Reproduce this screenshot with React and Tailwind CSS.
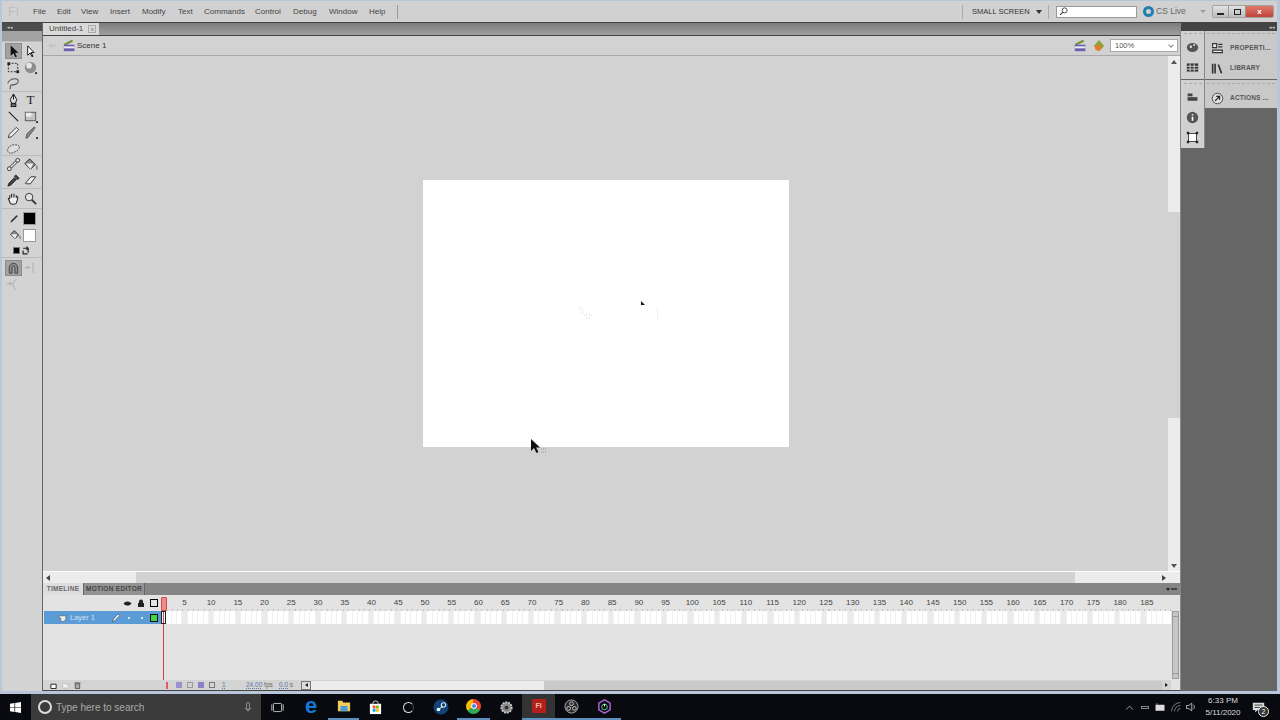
const font = { fontFamily: '"Liberation Sans", Arial, sans-serif' };

const menus = [
  ['File', 'w-[24px]'], ['Edit', 'w-[24px]'], ['View', 'w-[29px]'], ['Insert', 'w-[32px]'], ['Modify', 'w-[36px]'],
  ['Text', 'w-[26px]'], ['Commands', 'w-[51px]'], ['Control', 'w-[38px]'], ['Debug', 'w-[36px]'], ['Window', 'w-[40px]'], ['Help', 'w-[28px]'],
];

const ticks = [];
for (let n = 5; n <= 185; n += 5) ticks.push(n);
const cells = Array.from({ length: 188 }, (_, i) => i + 1);

function Ic({ children, className = 'w-4 h-4' }) {
  return <svg viewBox="0 0 16 16" className={className + ' shrink-0'}>{children}</svg>;
}

const tools = {
  arrow: <path d="M5 1.500v11l3-2.600 2 4.300 1.600-.8-2-4.100h3.600z" fill="#111" />,
  sub: <path d="M5 2v10l2.600-2.400 2 4 1-.5-2-4h3.200z" fill="#fff" stroke="#111" />,
  free: <g><rect x="2.500" y="3.500" width="10" height="9" fill="none" stroke="#222" strokeDasharray="2 1.500" /><rect x="1.500" y="2.500" width="3" height="3" fill="#222" /><rect x="11" y="11" width="3" height="3" fill="#222" /></g>,
  ball: <g><circle cx="8" cy="8" r="6" fill="#8e8e8e" /><circle cx="6.500" cy="6" r="3" fill="#e8e8e8" /><path d="M13 13h2v2h-2z" fill="#222" /></g>,
  lasso: <path d="M2 8c0-3 4-5 8-5s4 4 1 5.500-5 .5-6 1.500 .5 2-1 4" fill="none" stroke="#555" strokeWidth="1.100" />,
  pen: <g><path d="M8 1l3.500 6-1.500 4H6L4.500 7z" fill="#ddd" stroke="#111" /><path d="M8 2v5" stroke="#111" /><rect x="5.500" y="11.500" width="5" height="3" fill="#777" stroke="#111" /></g>,
  line: <path d="M3 3l10 10" stroke="#222" strokeWidth="1.200" />,
  rect: <g><rect x="2.500" y="3.500" width="11" height="9" fill="#c4c4c4" stroke="#555" /><rect x="3" y="4" width="6" height="4" fill="#eee" /><path d="M14 13h2v2h-2z" fill="#222" /></g>,
  pencil: <path d="M2.500 13.500l1-3.500 7.500-7.500 2.500 2.500L6 12.500z" fill="#eee" stroke="#333" />,
  brush: <g><path d="M3 14c2 0 3-1 3.500-2.500L13 3l-1-1-7.500 7C3.500 10 4 12 3 14z" fill="#888" stroke="#333" strokeWidth=".7" /><path d="M14 13h2v2h-2z" fill="#222" /></g>,
  deco: <path d="M2 11c-1-3 2-7 7-7s6 2 5 4-6 5-9 5c-1 0-3-1-3-2z" fill="#ddd" stroke="#444" strokeDasharray="2 1" />,
  bone: <g><path d="M4.500 11.500l7-7" stroke="#333" strokeWidth="3" /><path d="M4.500 11.500l7-7" stroke="#eee" strokeWidth="1.400" /><circle cx="3.500" cy="12.500" r="2" fill="#eee" stroke="#333" /><circle cx="12.500" cy="3.500" r="2" fill="#eee" stroke="#333" /></g>,
  bucket: <g><path d="M7 2l6 6-5 5-6-6z" fill="#888" stroke="#222" /><path d="M3 7h8l-3 6z" fill="#eee" /><path d="M14 9c1 2 1.500 3 .5 4.500" stroke="#444" fill="none" /></g>,
  drop: <path d="M2 14l1-3 6-6 2 2-6 6zM9 3.500l1.500-1.500 3.500 3.500-1.500 1.500z" fill="#444" stroke="#111" strokeWidth=".8" />,
  eraser: <path d="M2.500 11l6-7h5l-5.500 7.500H4z" fill="#eee" stroke="#333" />,
  hand: <path d="M4 8V4.500M6 7V3M8.500 7V3M11 7.500V4.500M4 8l-1.500 0 2 5c1 1.500 6 1.500 6.500 0l1.500-5V5.500" fill="#eee" stroke="#222" strokeWidth="1.100" />,
  zoom: <g><circle cx="6.500" cy="6.500" r="4" fill="#e2e2e2" stroke="#333" /><path d="M9.500 9.500l4.500 4.500" stroke="#333" strokeWidth="2" /></g>,
  snap: <path d="M3.500 13V7a4.500 4.500 0 0 1 9 0v6h-3V7a1.500 1.500 0 0 0-3 0v6z" fill="#8a8a8a" stroke="#444" />,
  smooth: <path d="M2 7h5M5 5l2 2-2 2M10 2c3 3-2 6 2 11" fill="none" stroke="#aaa" />,
  straight: <path d="M1 7h5M4 5l2 2-2 2M11 2l-4 5 3 7" fill="none" stroke="#aaa" />,
};

function Tool({ name, active }) {
  return (
    <div className={'w-[17px] h-[16px] flex items-center justify-center ' + (active ? 'bg-[#a3a3a3] border border-[#8c8c8c]' : '')}>
      {name === 'T' ? (
        <span className="text-[13px] leading-[14px] text-[#222]" style={{ fontFamily: '"Liberation Serif", serif' }}>T</span>
      ) : name ? (
        <Ic className="w-[15px] h-[15px]">{tools[name]}</Ic>
      ) : null}
    </div>
  );
}

function ToolRow({ a, b, active }) {
  return (
    <div className="flex justify-center">
      <Tool name={a} active={active} />
      <Tool name={b} />
    </div>
  );
}

function ToolBar() {
  return (
    <div className="w-[41px] shrink-0 bg-[#d3d3d3] border-r border-[#666] flex flex-col">
      <div className="h-[8px] bg-[#4d4d4d] text-[5px] leading-[8px] text-[#ccc] pl-[5px]">◂◂</div>
      <div className="h-[11px] bg-[#a2a2a2] border-b border-[#bdbdbd]" />
      <div className="pt-[1px] h-[49px] flex flex-col">
        <ToolRow a="arrow" b="sub" active />
        <ToolRow a="free" b="ball" />
        <ToolRow a="lasso" />
      </div>
      <div className="border-t border-[#bcbcbc] h-[64px] flex flex-col">
        <ToolRow a="pen" b="T" />
        <ToolRow a="line" b="rect" />
        <ToolRow a="pencil" b="brush" />
        <ToolRow a="deco" />
      </div>
      <div className="border-t border-[#bcbcbc] h-[33px] flex flex-col">
        <ToolRow a="bone" b="bucket" />
        <ToolRow a="drop" b="eraser" />
      </div>
      <div className="border-t border-[#bcbcbc] h-[20px] flex flex-col justify-center">
        <ToolRow a="hand" b="zoom" />
      </div>
      <div className="border-t border-[#bcbcbc] h-[49px] flex flex-col items-center pt-[1px]">
        <div className="flex items-center h-[17px] gap-[2px]">
          <Ic className="w-[12px] h-[12px]"><path d="M2 13l1-3 7-7 2 1-8 8z" fill="#333" /></Ic>
          <div className="w-[13px] h-[13px] bg-black border border-[#999]" />
        </div>
        <div className="flex items-center h-[16px] gap-[2px]">
          <Ic className="w-[12px] h-[12px]">{tools.bucket}</Ic>
          <div className="w-[13px] h-[13px] bg-white border border-[#999]" />
        </div>
        <div className="flex items-center h-[14px] gap-[2px]">
          <div className="w-[7px] h-[7px] bg-black border border-[#777]" />
          <Ic className="w-[9px] h-[9px]"><path d="M2 4h9v8M8 1l3 3-3 3M2 8v6h8" fill="none" stroke="#222" strokeWidth="2" /></Ic>
        </div>
      </div>
      <div className="border-t border-[#bcbcbc] pt-[2px] flex flex-col">
        <ToolRow a="snap" b="smooth" active />
        <ToolRow a="straight" />
      </div>
    </div>
  );
}

function Clapper() {
  return (
    <Ic className="w-[13px] h-[13px]">
      <path d="M1 6l10-5 1.500 2-10 5z" fill="#6f8f2a" />
      <rect x="1" y="7" width="13" height="8" fill="#6d5fb0" />
      <rect x="1" y="9" width="13" height="2.500" fill="#e8e8f0" />
    </Ic>
  );
}

function Top() {
  return (
    <div className="h-[23px] shrink-0 flex items-center bg-[#d1d1d1] border-t border-t-[#b7c6d8] border-b border-b-[#444] text-[#444] text-[8px]">
      <div className="w-[31px] pl-[6px] text-[13px] text-[#bdbdbd]">Fl</div>
      {menus.map(([m, w]) => (
        <div key={m} className={w}>{m}</div>
      ))}
      <div className="w-px h-[14px] bg-[#9a9a9a]" />
      <div className="flex-1" />
      <div className="w-px h-[14px] bg-[#aaa] mr-[9px]" />
      <div className="w-[64px] text-[7.500px] text-[#333]">SMALL SCREEN</div>
      <div className="w-0 h-0 border-x-[3px] border-x-transparent border-t-[4px] border-t-[#333] mr-[6px]" />
      <div className="w-px h-[14px] bg-[#aaa] mr-[7px]" />
      <div className="w-[81px] h-[12px] bg-white border border-[#999] flex items-center pl-[2px] mr-[6px]">
        <Ic className="w-[9px] h-[9px]"><circle cx="10" cy="6" r="4.500" fill="none" stroke="#333" strokeWidth="1.500" /><path d="M7 9l-5 5" stroke="#333" strokeWidth="1.800" /></Ic>
      </div>
      <div className="w-[11px] h-[11px] rounded-full border-[3px] border-[#1f7fb0] mr-[2px]" />
      <div className="w-[44px] text-[8.500px] text-[#666]">CS Live</div>
      <div className="w-0 h-0 border-x-[3px] border-x-transparent border-t-[3px] border-t-[#999] mr-[6px]" />
      <div className="flex h-[13px] w-[62px] mr-[3px] rounded-[2px] border border-[#a0a0a0] overflow-hidden">
        <div className="w-[16px] bg-gradient-to-b from-[#e2e2e2] to-[#bcbcbc] flex items-end justify-center pb-[2px] border-r border-[#999]"><div className="w-[7px] h-[2px] bg-[#222]" /></div>
        <div className="w-[17px] bg-gradient-to-b from-[#e2e2e2] to-[#bcbcbc] flex items-center justify-center border-r border-[#999]"><div className="w-[7px] h-[6px] border border-[#222]" /></div>
        <div className="flex-1 bg-gradient-to-b from-[#df7a6c] to-[#bf4238] text-white text-[8px] leading-[11px] text-center font-bold">x</div>
      </div>
    </div>
  );
}

function Scrolls() {
  return (
    <div className="w-[12px] shrink-0 flex flex-col bg-[#ececec]">
      <div className="h-[11px] flex items-center justify-center"><div className="w-0 h-0 border-x-[3px] border-x-transparent border-b-[4px] border-b-[#555]" /></div>
      <div className="h-[145px]" />
      <div className="h-[206px] bg-[#d2d2d2]" />
      <div className="flex-1" />
      <div className="h-[11px] flex items-center justify-center"><div className="w-0 h-0 border-x-[3px] border-x-transparent border-t-[4px] border-t-[#555]" /></div>
    </div>
  );
}

function Timeline() {
  return (
    <div className="h-[107px] shrink-0 flex flex-col">
      <div className="h-[12px] shrink-0 flex bg-[#858585] text-[6.500px] leading-[12px] font-bold tracking-[.3px]">
        <div className="w-[40px] bg-[#dedede] text-[#666] text-center">TIMELINE</div>
        <div className="w-[62px] bg-[#929292] text-[#444] text-center border-x border-[#666]">MOTION EDITOR</div>
        <div className="flex-1" />
        <div className="pr-[3px] flex items-center gap-[1px]">
          <div className="w-0 h-0 border-x-[2px] border-x-transparent border-t-[3px] border-t-[#222]" />
          <div className="w-[6px] h-[2px] bg-[#444]" />
        </div>
      </div>
      <div className="flex-1 flex bg-[#e3e3e3] min-h-0">
        <div className="w-[118px] shrink-0 flex flex-col">
          <div className="h-[16px] flex items-center justify-end pr-[3px] gap-[5px]">
            <Ic className="w-[9px] h-[9px]"><path d="M1 8c3-5 11-5 14 0-3 5-11 5-14 0z" fill="#222" /></Ic>
            <Ic className="w-[8px] h-[9px]"><path d="M4 7V4a4 4 0 0 1 8 0v3h2v8H2V7z" fill="#222" /></Ic>
            <div className="w-[8px] h-[8px] border-[1.500px] border-black" />
          </div>
          <div className="h-[13px] ml-[1px] bg-[#5b9bd6] flex items-center text-[7.500px] text-[#cfe2f5]">
            <Ic className="w-[9px] h-[9px] ml-[14px]"><path d="M2 5h12v5l-3 5H5V9H2z" fill="#eee" stroke="#333" strokeWidth=".8" /></Ic>
            <span className="ml-[3px] w-[41px]">Layer 1</span>
            <Ic className="w-[10px] h-[10px]"><path d="M2 14l2-4 7-8 3 2-8 8z" fill="#fff" stroke="#111" strokeWidth=".7" /></Ic>
            <div className="w-[2px] h-[2px] bg-white rounded-full ml-[7px]" />
            <div className="w-[2px] h-[2px] bg-white rounded-full ml-[11px]" />
            <div className="w-[8px] h-[8px] ml-[7px] bg-[#3fd64b] border border-[#111]" />
          </div>
          <div className="flex-1" />
          <div className="h-[10px] bg-[#d4d4d4] flex items-center pl-[7px] gap-[5px]">
            <Ic className="w-[7px] h-[7px]"><path d="M2 5h12v10H2z" fill="#fff" stroke="#111" strokeWidth="2" /></Ic>
            <Ic className="w-[7px] h-[7px]"><path d="M1 3h6l2 2h6v9H1z" fill="#eee" stroke="#999" /></Ic>
            <Ic className="w-[7px] h-[7px]"><path d="M3 4h10v11H3zM1 2h14" fill="#aaa" stroke="#333" strokeWidth="1.500" /></Ic>
          </div>
        </div>
        <div className="flex-1 min-w-0 flex">
          <div className="flex-1 min-w-0 flex flex-col relative">
            <div className="h-[14px] flex items-center text-[8px] text-[#444] pl-[10px] pt-[1px] overflow-hidden">
              {ticks.map((t) => (
                <div key={t} className="w-[26.740px] shrink-0 text-center">{t}</div>
              ))}
            </div>
            <div className="h-[2px] bg-[repeating-linear-gradient(90deg,#c4c4c4_0,#c4c4c4_1px,transparent_1px,transparent_5.340px)]" />
            <div className="h-[13px] flex bg-white overflow-hidden">
              {cells.map((c) => (
                <div key={c} className={'w-[5.340px] shrink-0 border-r border-[#f1f1f1] ' + (c % 5 === 0 ? 'bg-[#ebebeb]' : 'bg-white')} />
              ))}
            </div>
            <div className="flex-1" />
            <div className="h-[10px] bg-[#d4d4d4] flex items-center text-[6.500px] text-[#5a78a8]">
              <div className="w-[2px] h-[7px] bg-[#e85a5a] ml-[5px] mr-[8px]" />
              <div className="w-[6px] h-[6px] bg-[#9a8fcf] mr-[5px]" />
              <div className="w-[6px] h-[6px] border border-[#999] mr-[5px]" />
              <div className="w-[6px] h-[6px] bg-[#8d80c4] mr-[5px]" />
              <div className="w-[6px] h-[6px] border border-[#777] mr-[7px]" />
              <span className="w-[24px] underline decoration-dotted">1</span>
              <span className="w-[33px]"><span className="underline decoration-dotted">24.00</span><span className="text-[#666]"> fps</span></span>
              <span className="w-[22px]"><span className="underline decoration-dotted">0.0</span><span className="text-[#666]"> s</span></span>
              <div className="w-[10px] h-[9px] border border-[#777] bg-[#ddd] flex items-center justify-center">
                <div className="w-0 h-0 border-y-[2px] border-y-transparent border-r-[3px] border-r-[#222]" />
              </div>
              <div className="w-[233px] h-[9px] bg-[#ececec]" />
              <div className="flex-1 h-[9px] bg-[#c9c9c9]" />
              <div className="w-[9px] h-[9px] flex items-center justify-center">
                <div className="w-0 h-0 border-y-[2px] border-y-transparent border-l-[3px] border-l-[#222]" />
              </div>
            </div>
            <div className="absolute left-0 top-[2px] w-[6px] h-[14px] bg-[#ee8a8a] border border-[#d04b4b] rounded-[1px]" />
            <div className="absolute left-[2px] top-[16px] bottom-[10px] w-px bg-[#c9434b]" />
            <div className="absolute left-0 top-[16px] w-[5px] h-[13px] border border-[#222]" />
          </div>
          <div className="w-[9px] shrink-0 flex flex-col pt-[16px] pb-[11px] pl-[1px] pr-[1px]">
            <div className="flex-1 bg-[#c6c6c6] border border-[#9b9b9b] flex flex-col justify-between items-center py-[4px]">
              <div className="w-[5px] h-px bg-[#999]" />
              <div className="w-[5px] h-px bg-[#999]" />
            </div>
          </div>
        </div>
      </div>
    </div>
  );
}

function Stage() {
  return (
    <div className="w-[366px] h-[267px] bg-white relative">
      <svg viewBox="0 0 18 18" className="absolute left-[155px] top-[125px] w-[18px] h-[18px]">
        <path d="M1 2l4 4M3 7l3 2M8 9h1M11 9h1M8 13h1M11 13h1M7 10v2M13 10v2" stroke="#cfcfcf" strokeDasharray="1 1" />
      </svg>
      <svg viewBox="0 0 4 4" className="absolute left-[218px] top-[121px] w-[4px] h-[4px]"><path d="M0 0l4 4H0z" fill="#111" /></svg>
      <div className="absolute left-[234px] top-[127px] w-px h-[12px] bg-[#f0f0f0]" />
      <svg viewBox="0 0 18 18" className="absolute left-[107px] top-[258px] w-[18px] h-[18px]">
        <path d="M1 1v12l3-3 2.500 5 2-1-2.400-4.600H10z" fill="#111" />
        <path d="M11 11h5M11 14h5" stroke="#999" strokeDasharray="1 1" />
      </svg>
    </div>
  );
}

function Middle() {
  return (
    <div className="flex-1 min-w-0 flex flex-col bg-[#d2d2d2] border-r border-[#888] border-b border-b-[#444]">
      <div className="h-[13px] shrink-0 flex bg-gradient-to-b from-[#7b7b7b] to-[#a0a0a0] border-b border-[#444]">
        <div className="w-[56px] bg-[#d9d9d9] flex items-center text-[8px] text-[#444] pl-[6px] gap-[5px]">
          <span>Untitled-1</span>
          <div className="w-[8px] h-[8px] border border-[#aaa] text-[6px] leading-[6px] text-center text-[#666]">x</div>
        </div>
      </div>
      <div className="h-[20px] shrink-0 flex items-center border-b border-[#a8a8a8] text-[8px] text-[#333]">
        <Ic className="w-[9px] h-[9px] ml-[5px] mr-[6px]"><path d="M1 8l5-5v3h9v4H6v3z" fill="#c4c4c4" /></Ic>
        <Clapper />
        <span className="ml-[1px]">Scene 1</span>
        <div className="flex-1" />
        <Clapper />
        <Ic className="w-[14px] h-[14px] ml-[5px]"><path d="M8 1l6 7-6 6-6-6z" fill="#8aa53a" /><circle cx="7" cy="10" r="3.500" fill="#e8792b" /></Ic>
        <div className="ml-[4px] mr-[2px] w-[68px] h-[13px] bg-white border border-[#aaa] flex items-center justify-between px-[4px] text-[7.500px] text-[#555]">
          <span>100%</span>
          <div className="w-[4px] h-[4px] border-r border-b border-[#888] rotate-45 -mt-[2px]" />
        </div>
      </div>
      <div className="flex-1 min-h-0 flex">
        <div className="flex-1 min-w-0 flex items-center justify-center">
          <Stage />
        </div>
        <Scrolls />
      </div>
      <div className="h-[12px] shrink-0 flex items-center bg-[#ececec] border-t border-white">
        <div className="w-[93px] h-full flex items-center pl-[3px]">
          <div className="w-0 h-0 border-y-[3px] border-y-transparent border-r-[4px] border-r-[#444]" />
        </div>
        <div className="w-[939px] h-full bg-[#d2d2d2]" />
        <div className="flex-1 h-full flex items-center justify-end pr-[14px]">
          <div className="w-0 h-0 border-y-[3px] border-y-transparent border-l-[4px] border-l-[#444]" />
        </div>
      </div>
      <Timeline />
    </div>
  );
}

function Dock() {
  const bar = (n) => <div className={'h-[2px] border-t border-dashed border-[#aaa] ' + n} />;
  return (
    <div className="w-[96px] shrink-0 bg-[#666666] flex flex-col">
      <div className="h-[8px] bg-[#444] text-[5px] leading-[8px] text-[#ccc] flex justify-end pr-[2px]">◂◂</div>
      <div className="flex items-start">
        <div className="w-[24px] bg-[#d0d0d0] border-r border-[#888] flex flex-col items-center">
          <div className="h-[49px] w-full border-b border-[#666] flex flex-col items-center pt-[2px]">
            {bar('w-[18px]')}
            <Ic className="w-[13px] h-[13px] mt-[6px]"><ellipse cx="8" cy="8" rx="7" ry="5.500" fill="#555" /><circle cx="6" cy="7" r="1.500" fill="#ddd" /><circle cx="10" cy="5" r="1.200" fill="#ddd" /></Ic>
            <Ic className="w-[13px] h-[13px] mt-[7px]"><path d="M1 3h14v10H1z" fill="#333" /><path d="M5 3v10M10 3v10M1 6.500h14M1 10h14" stroke="#eee" /></Ic>
          </div>
          <div className="h-[68px] w-full flex flex-col items-center pt-[3px]">
            {bar('w-[18px]')}
            <Ic className="w-[13px] h-[13px] mt-[6px]"><path d="M2 3h6v4h6v5H2z" fill="#444" /><path d="M2 7h12" stroke="#ddd" /></Ic>
            <Ic className="w-[13px] h-[13px] mt-[7px]"><circle cx="8" cy="8" r="7" fill="#555" /><path d="M8 7v5M8 4v1.500" stroke="#fff" strokeWidth="2" /></Ic>
            <Ic className="w-[13px] h-[13px] mt-[7px]"><rect x="3" y="3" width="10" height="10" fill="#fff" stroke="#222" /><path d="M1 1h3v3H1zM12 1h3v3h-3zM1 12h3v3H1zM12 12h3v3h-3z" fill="#222" /></Ic>
          </div>
        </div>
        <div className="flex-1 min-w-0 bg-[#c9c9c9] text-[6.500px] text-[#555] font-bold tracking-[.2px]">
          <div className="h-[49px] border-b border-[#666] pt-[2px] px-[2px]">
            {bar('w-full')}
            <div className="h-[20px] mt-[3px] flex items-center pl-[4px] gap-[6px]">
              <Ic className="w-[13px] h-[13px]"><path d="M2 2h5v5H2zM2 10h12v3H2zM9 3h5M9 6h5" fill="#eee" stroke="#333" strokeWidth="1.400" /></Ic>
              <span>PROPERTI...</span>
            </div>
            <div className="h-[20px] flex items-center pl-[4px] gap-[6px]">
              <Ic className="w-[13px] h-[13px]"><path d="M2 2v12M5 2v12M9 3l4 11" stroke="#333" strokeWidth="2" /></Ic>
              <span>LIBRARY</span>
            </div>
          </div>
          <div className="h-[28px] pt-[3px] px-[2px]">
            {bar('w-full')}
            <div className="h-[20px] mt-[3px] flex items-center pl-[4px] gap-[6px]">
              <Ic className="w-[13px] h-[13px]"><circle cx="8" cy="8" r="6.500" fill="#ddd" stroke="#333" /><path d="M5 11l5-5M6.500 5.500H10.500V9.500" fill="none" stroke="#222" strokeWidth="1.500" /></Ic>
              <span>ACTIONS ...</span>
            </div>
          </div>
        </div>
      </div>
    </div>
  );
}

function Taskbar() {
  return (
    <div className="h-[26px] shrink-0 bg-[#090a10] flex items-center text-white">
      <div className="w-[31px] flex justify-center">
        <svg viewBox="0 0 16 16" className="w-[11px] h-[11px]"><path d="M0 2.500l6.500-1v6H0zM7.500 1.300L16 0v7.500H7.500zM0 8.500h6.500v6l-6.500-1zM7.500 8.500H16V16l-8.500-1.300z" fill="#fff" /></svg>
      </div>
      <div className="w-[230px] h-full bg-[#3b3b3b] flex items-center pl-[7px] text-[10px] text-[#aaa]">
        <div className="w-[14px] h-[14px] rounded-full border-2 border-[#ddd] mr-[4px]" />
        <span className="flex-1">Type here to search</span>
        <svg viewBox="0 0 16 16" className="w-[12px] h-[12px] mr-[7px]"><rect x="6" y="2" width="4" height="9" rx="2" fill="none" stroke="#aaa" /><path d="M4.500 9c0 4 7 4 7 0M8 12v2" fill="none" stroke="#aaa" /></svg>
      </div>
      <div className="w-[33px] flex justify-center">
        <svg viewBox="0 0 16 16" className="w-[13px] h-[13px]"><rect x="3" y="3" width="10" height="10" rx="1" fill="none" stroke="#ddd" /><path d="M1 4v8M15 4v8" stroke="#ddd" /></svg>
      </div>
      <div className="w-[34px] flex justify-center">
        <span className="text-[22px] leading-[20px] -mt-[3px] font-bold text-[#1478d4]">e</span>
      </div>
      <div className="w-[31px] h-full flex justify-center items-center border-b-2 border-[#5d8fc0]">
        <svg viewBox="0 0 16 16" className="w-[14px] h-[14px]"><path d="M1 2h5l1 2h8v10H1z" fill="#f5c95a" /><rect x="4" y="8" width="8" height="6" fill="#4a9ed8" /></svg>
      </div>
      <div className="w-[33px] flex justify-center">
        <svg viewBox="0 0 16 16" className="w-[15px] h-[15px]"><path d="M2 4h12v11H2z" fill="#fff" /><path d="M5 4a3 3 0 0 1 6 0" fill="none" stroke="#ddd" /><rect x="5" y="6" width="3" height="3" fill="#f25022" /><rect x="8.500" y="6" width="3" height="3" fill="#7fba00" /><rect x="5" y="9.500" width="3" height="3" fill="#00a4ef" /><rect x="8.500" y="9.500" width="3" height="3" fill="#ffb900" /></svg>
      </div>
      <div className="w-[32px] flex justify-center">
        <div className="w-[11px] h-[11px] rounded-full border border-[#ddd] border-r-[#444]" />
      </div>
      <div className="w-[33px] flex justify-center">
        <svg viewBox="0 0 16 16" className="w-[16px] h-[16px]"><circle cx="8" cy="8" r="7.500" fill="#12447a" /><circle cx="10.500" cy="6" r="2.300" fill="none" stroke="#fff" /><circle cx="5.500" cy="10.500" r="1.800" fill="#fff" /><path d="M6 10l4-3" stroke="#fff" /></svg>
      </div>
      <div className="w-[33px] h-full flex justify-center items-center border-b-2 border-[#5d8fc0]">
        <div className="w-[15px] h-[15px] rounded-full bg-[conic-gradient(#ea4335_0_33%,#34a853_33%_66%,#fbbc05_66%)] flex items-center justify-center">
          <div className="w-[6px] h-[6px] rounded-full bg-[#4285f4] border border-white" />
        </div>
      </div>
      <div className="w-[32px] flex justify-center">
        <svg viewBox="0 0 16 16" className="w-[15px] h-[15px]"><circle cx="8" cy="8" r="5.500" fill="#888" stroke="#ccc" strokeDasharray="2 1" strokeWidth="2" /><circle cx="8" cy="8" r="2" fill="#333" /></svg>
      </div>
      <div className="w-[33px] h-full bg-[#333] flex justify-center items-center border-b-2 border-[#5d8fc0]">
        <div className="w-[14px] h-[14px] bg-[#b3201c] text-[7px] leading-[14px] font-bold text-center text-[#f4c0b0]">Fl</div>
      </div>
      <div className="w-[33px] h-full flex justify-center items-center border-b-2 border-[#5d8fc0]">
        <svg viewBox="0 0 16 16" className="w-[15px] h-[15px]"><circle cx="8" cy="8" r="7" fill="#2a2a2a" stroke="#aaa" /><circle cx="8" cy="5" r="2" fill="none" stroke="#ccc" /><circle cx="5" cy="10" r="2" fill="none" stroke="#ccc" /><circle cx="11" cy="10" r="2" fill="none" stroke="#ccc" /></svg>
      </div>
      <div className="w-[33px] h-full flex justify-center items-center border-b-2 border-[#5d8fc0]">
        <svg viewBox="0 0 16 16" className="w-[15px] h-[15px]"><path d="M8 1l6 3.500v7L8 15l-6-3.500v-7z" fill="none" stroke="#b066d8" strokeWidth="1.500" /><circle cx="8" cy="8.500" r="3" fill="none" stroke="#50d890" /><path d="M8 5v3" stroke="#fff" /></svg>
      </div>
      <div className="flex-1" />
      <div className="flex items-center text-[#ddd] mr-[1px]">
        <div className="w-[15.500px] flex justify-center"><svg viewBox="0 0 16 16" className="w-[11px] h-[11px]"><path d="M3 11l5-5 5 5" fill="none" stroke="#ddd" /></svg></div>
        <div className="w-[15.500px] flex justify-center"><div className="w-[8px] h-[3px] border border-[#888]" /></div>
        <div className="w-[15.500px] flex justify-center"><svg viewBox="0 0 16 16" className="w-[12px] h-[12px]"><rect x="2" y="5" width="12" height="8" fill="#ddd" /><path d="M4 3v2" stroke="#ddd" /></svg></div>
        <div className="w-[15.500px] flex justify-center"><svg viewBox="0 0 16 16" className="w-[12px] h-[12px]"><path d="M2 14a12 12 0 0 1 12-12M6 14a8 8 0 0 1 8-8M10 14a4 4 0 0 1 4-4" fill="none" stroke="#999" /></svg></div>
        <div className="w-[15.500px] flex justify-center"><svg viewBox="0 0 16 16" className="w-[12px] h-[12px]"><path d="M2 6h3l4-3v10l-4-3H2zM11 5c2 2 2 4 0 6" fill="none" stroke="#ddd" /></svg></div>
      </div>
      <div className="w-[46px] flex flex-col items-center text-[8px] leading-[12px] text-[#ddd]">
        <span>6:33 PM</span>
        <span>5/11/2020</span>
      </div>
      <div className="w-[34px] pl-[6px] flex relative">
        <svg viewBox="0 0 16 16" className="w-[13px] h-[13px]"><path d="M1 2h14v9H7l-3 3v-3H1z" fill="#ddd" /><path d="M3 5h10M3 8h10" stroke="#222" /></svg>
        <div className="absolute left-[12px] top-[5px] w-[11px] h-[11px] rounded-full bg-[#333] border border-[#eee] text-[7px] leading-[9px] text-center">2</div>
      </div>
    </div>
  );
}

export default function App() {
  return (
    <div className="w-[1280px] h-[720px] overflow-hidden flex flex-col bg-[#b7c6d8]" style={font}>
      <div className="flex-1 min-h-0 flex flex-col pl-[2px] pr-[3px] pb-[3px]">
        <Top />
        <div className="flex-1 min-h-0 flex">
          <ToolBar />
          <Middle />
          <Dock />
        </div>
      </div>
      <Taskbar />
    </div>
  );
}
